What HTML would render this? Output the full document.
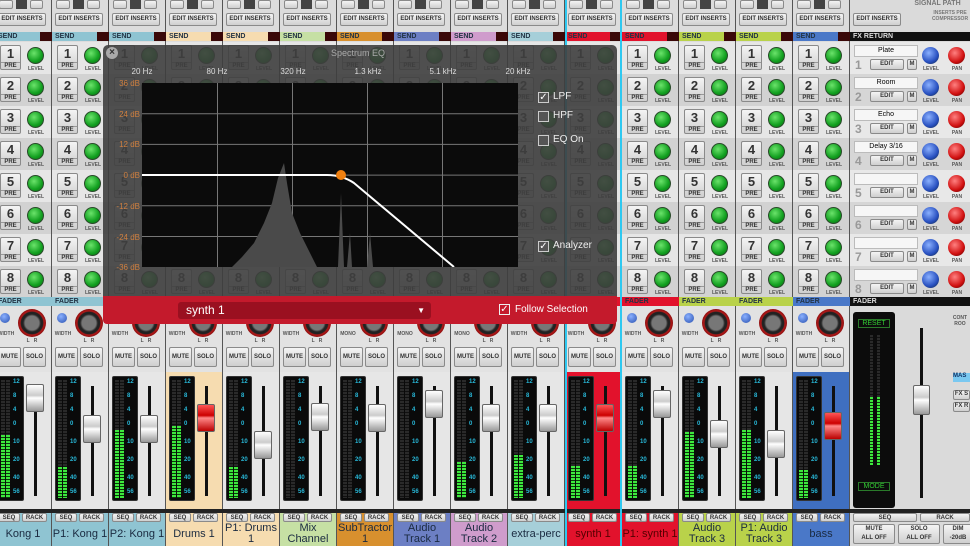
<!DOCTYPE html>
<html><head><meta charset="utf-8">
<style>
*{box-sizing:border-box;margin:0;padding:0}
body{width:970px;height:546px;overflow:hidden;background:#bdbdbd;font-family:"Liberation Sans",sans-serif;position:relative}
.a{position:absolute}
.btn{position:absolute;background:linear-gradient(#f4f4f4,#cfcfcf);border:1px solid #8a8a8a;border-radius:2px;color:#333;font-size:6px;font-weight:bold;text-align:center}
.knob{position:absolute;border-radius:50%;background:radial-gradient(circle at 40% 35%,#6be36b,#12a020 60%,#0a6a12);border:1px solid #2a4a2a}
.lbl{position:absolute;font-size:5px;color:#555;font-weight:bold;text-align:center}
.num{position:absolute;font-size:6px;color:#28b8d8;font-weight:bold}
</style></head><body>
<div id="m"></div>
<script>
var names=["Kong 1","P1: Kong 1","P2: Kong 1","Drums 1","P1: Drums 1","Mix Channel","SubTractor 1","Audio Track 1","Audio Track 2","extra-perc","synth 1","P1: synth 1","Audio Track 3","P1: Audio Track 3","bass"];
var cols=["#8fc4d2","#8fc4d2","#8fc4d2","#f6dcb0","#f6dcb0","#c6e0a4","#d8902e","#6c7fc4","#cf9ccc","#a6cfd9","#e2122c","#e2122c","#b9d24a","#b9d24a","#4a78c8"];
var cap=[384,415,415,404,431,403,404,390,404,404,404,390,420,430,412];
var grn=[435,467,430,426,467,999,999,999,462,455,466,466,432,430,470];
var h="";
for(var i=0;i<15;i++){
 var x=-5+57*i,c=cols[i];
 var fb=i==3?"#f6dcb0":i==10?"#e2122c":i==14?"#3f6fc0":"#e6e6e6";
 h+='<div class="a" style="left:'+x+'px;top:0;width:57px;height:546px;background:#dcdcdc;border-right:1px solid #555">';
 h+='<div class="btn" style="left:4px;top:0;width:14px;height:9px"></div><div class="a" style="left:21px;top:0;width:11px;height:9px;background:#444"></div><div class="btn" style="left:35px;top:0;width:13px;height:9px"></div>';
 h+='<div class="btn" style="left:3px;top:13px;width:48px;height:13px;line-height:11px">EDIT INSERTS</div>';
 h+='<div class="a" style="left:0;top:32px;width:45px;height:9px;background:'+c+';font-size:7px;font-weight:bold;color:#234;line-height:9px;padding-left:3px">SEND</div><div class="a" style="left:45px;top:32px;width:12px;height:9px;background:#3a0808"></div>';
 for(var k=0;k<8;k++){var y=42+32*k;
  h+='<div class="a" style="left:0;top:'+y+'px;width:56px;height:32px;background:'+(k%2?'#d2d2d2':'#e6e6e6')+'"></div>';
  h+='<div class="btn" style="left:5px;top:'+(y+3)+'px;width:21px;height:25px;font-size:13px;line-height:16px">'+(k+1)+'<div style="font-size:6px;line-height:7px;border-top:1px solid #999">PRE</div></div>';
  h+='<div class="knob" style="left:32px;top:'+(y+5)+'px;width:17px;height:17px"></div><div class="lbl" style="left:28px;top:'+(y+24)+'px;width:26px">LEVEL</div>';}
 h+='<div class="a" style="left:0;top:297px;width:57px;height:9px;background:'+c+';font-size:7px;font-weight:bold;color:#234;line-height:9px;padding-left:3px">FADER</div>';
 h+='<div class="a" style="left:0;top:306px;width:56px;height:66px;background:#e2e2e2"></div>';
 h+='<div class="a" style="left:5px;top:313px;width:10px;height:10px;border-radius:50%;background:radial-gradient(circle at 40% 35%,#8ab0ff,#2850b0)"></div>';
 h+='<div class="a" style="left:23px;top:309px;width:28px;height:28px;border-radius:50%;background:radial-gradient(#777 35%,#222 45%,#222 55%,#b01818 60%,#300 100%)"></div>';
 h+='<div class="lbl" style="left:0;top:331px;width:22px">'+(i>=6&&i<=8?'MONO':'WIDTH')+'</div><div class="lbl" style="left:24px;top:338px;width:26px">L &nbsp; R</div>';
 h+='<div class="btn" style="left:3px;top:347px;width:23px;height:20px;line-height:18px">MUTE</div><div class="btn" style="left:28px;top:347px;width:23px;height:20px;line-height:18px">SOLO</div>';
 h+='<div class="a" style="left:0;top:372px;width:56px;height:137px;background:'+fb+'"></div>';
 h+='<div class="a" style="left:3px;top:376px;width:26px;height:125px;background:#0a0a0a;border-radius:2px;border:1px solid #333"></div>';
 h+='<div class="a" style="left:6px;top:380px;width:4px;height:118px;background:repeating-linear-gradient(#2a2a2a 0 2px,#111 2px 3px)"></div><div class="a" style="left:11px;top:380px;width:4px;height:118px;background:repeating-linear-gradient(#2a2a2a 0 2px,#111 2px 3px)"></div>';
 if(grn[i]<999){h+='<div class="a" style="left:6px;top:'+grn[i]+'px;width:4px;height:'+(498-grn[i])+'px;background:repeating-linear-gradient(#3ee83e 0 2px,#0a3a0a 2px 3px)"></div><div class="a" style="left:11px;top:'+grn[i]+'px;width:4px;height:'+(498-grn[i])+'px;background:repeating-linear-gradient(#3ee83e 0 2px,#0a3a0a 2px 3px)"></div>';}
 var nums=["12","8","4","0","10","20","40","56"],ny=[379,393,407,421,439,457,475,489];
 for(var n=0;n<8;n++)h+='<div class="num" style="left:18px;top:'+ny[n]+'px">'+nums[n]+'</div>';
 h+='<div class="a" style="left:39px;top:386px;width:3px;height:110px;background:#111"></div>';
 var red=(i==3||i==10||i==14);
 h+='<div class="a" style="left:31px;top:'+cap[i]+'px;width:18px;height:28px;border-radius:2px;background:'+(red?'linear-gradient(#f55,#c00 40%,#f88 50%,#b00)':'linear-gradient(#fff,#ccc 40%,#fff 50%,#999)')+';border:1px solid #666"></div>';
 h+='<div class="a" style="left:0;top:509px;width:57px;height:4px;background:#222"></div>';
 h+='<div class="a" style="left:0;top:513px;width:56px;height:33px;background:'+c+'"></div>';
 h+='<div class="btn" style="left:3px;top:513px;width:22px;height:9px;line-height:8px">SEQ</div><div class="btn" style="left:27px;top:513px;width:25px;height:9px;line-height:8px">RACK</div>';
 h+='<div class="a" style="left:0;top:522px;width:56px;height:24px;font-size:11px;line-height:11px;color:'+(i==10||i==11?'#500':'#1a2a40')+';text-align:center;display:flex;align-items:center;justify-content:center;overflow:hidden">'+names[i]+'</div>';
 h+='</div>';
}
h+='<div class="a" style="left:565px;top:0;width:2px;height:546px;background:#2ec8f0"></div><div class="a" style="left:620px;top:0;width:2px;height:546px;background:#2ec8f0"></div>';
// master
h+='<div class="a" style="left:850px;top:0;width:120px;height:546px;background:#dadada"></div>';
h+='<div class="btn" style="left:853px;top:13px;width:48px;height:13px;line-height:11px">EDIT INSERTS</div>';
h+='<div class="lbl" style="left:905px;top:0;width:65px;font-size:7px;color:#777">SIGNAL PATH</div><div class="lbl" style="left:930px;top:10px;width:40px;color:#777">INSERTS PRE COMPRESSOR</div>';
h+='<div class="a" style="left:850px;top:32px;width:120px;height:9px;background:#111;color:#ddd;font-size:7px;font-weight:bold;padding-left:3px;line-height:9px">FX RETURN</div>';
var fx=["Plate","Room","Echo","Delay 3/16","","","",""];
for(var k=0;k<8;k++){var y=42+32*k;
 h+='<div class="a" style="left:850px;top:'+y+'px;width:120px;height:32px;background:'+(k%2?'#d6d6d6':'#e8e8e8')+'"></div>';
 h+='<div class="a" style="left:854px;top:'+(y+3)+'px;width:64px;height:12px;background:#f6f6f6;border:1px solid #bbb;font-size:7px;text-align:center;line-height:10px">'+fx[k]+'</div>';
 h+='<div class="a" style="left:855px;top:'+(y+16)+'px;font-size:12px;color:#999;font-weight:bold">'+(k+1)+'</div>';
 h+='<div class="btn" style="left:870px;top:'+(y+17)+'px;width:34px;height:11px;line-height:9px">EDIT</div><div class="btn" style="left:907px;top:'+(y+17)+'px;width:10px;height:11px;line-height:9px">M</div>';
 h+='<div class="a" style="left:922px;top:'+(y+5)+'px;width:17px;height:17px;border-radius:50%;background:radial-gradient(circle at 40% 35%,#8ab0ff,#2850c0 60%,#123)"></div>';
 h+='<div class="a" style="left:948px;top:'+(y+5)+'px;width:17px;height:17px;border-radius:50%;background:radial-gradient(circle at 40% 35%,#ff8080,#d01010 60%,#400)"></div>';
 h+='<div class="lbl" style="left:918px;top:'+(y+24)+'px;width:26px">LEVEL</div><div class="lbl" style="left:945px;top:'+(y+24)+'px;width:24px">PAN</div>';}
h+='<div class="a" style="left:850px;top:297px;width:120px;height:9px;background:#111;color:#ddd;font-size:7px;font-weight:bold;padding-left:3px;line-height:9px">FADER</div>';
h+='<div class="a" style="left:853px;top:312px;width:42px;height:196px;background:#0c0c0c;border-radius:3px"></div>';
h+='<div class="a" style="left:858px;top:319px;width:32px;height:9px;border:1px solid #2a7a2a;color:#3c3;font-size:7px;text-align:center;line-height:7px">RESET</div>';
h+='<div class="a" style="left:870px;top:335px;width:3px;height:130px;background:repeating-linear-gradient(#2a2a2a 0 2px,#111 2px 3px)"></div><div class="a" style="left:877px;top:335px;width:3px;height:130px;background:repeating-linear-gradient(#2a2a2a 0 2px,#111 2px 3px)"></div>';
h+='<div class="a" style="left:870px;top:397px;width:3px;height:68px;background:repeating-linear-gradient(#3ee83e 0 2px,#0a3a0a 2px 3px)"></div><div class="a" style="left:877px;top:397px;width:3px;height:68px;background:repeating-linear-gradient(#3ee83e 0 2px,#0a3a0a 2px 3px)"></div>';
h+='<div class="a" style="left:858px;top:482px;width:32px;height:9px;border:1px solid #2a7a2a;color:#3c3;font-size:7px;text-align:center;line-height:7px">MODE</div>';
h+='<div class="a" style="left:920px;top:328px;width:3px;height:170px;background:#111"></div>';
h+='<div class="a" style="left:913px;top:385px;width:17px;height:30px;border-radius:2px;background:linear-gradient(#fff,#ccc 40%,#fff 50%,#999);border:1px solid #666"></div>';
h+='<div class="a" style="left:953px;top:373px;width:17px;height:9px;background:#7ac8f0;font-size:6px;font-weight:bold;color:#136">MAS</div>';
h+='<div class="btn" style="left:953px;top:390px;width:17px;height:10px">FX S</div><div class="btn" style="left:953px;top:402px;width:17px;height:10px">FX R</div>';
h+='<div class="lbl" style="left:950px;top:315px;width:20px">CONT ROO</div>';
h+='<div class="a" style="left:850px;top:509px;width:120px;height:4px;background:#222"></div>';
h+='<div class="btn" style="left:853px;top:513px;width:64px;height:9px;line-height:8px">SEQ</div><div class="btn" style="left:920px;top:513px;width:50px;height:9px;line-height:8px">RACK</div>';
h+='<div class="btn" style="left:853px;top:524px;width:42px;height:20px;line-height:9px">MUTE<br>ALL OFF</div><div class="btn" style="left:898px;top:524px;width:42px;height:20px;line-height:9px">SOLO<br>ALL OFF</div><div class="btn" style="left:943px;top:524px;width:30px;height:20px;line-height:9px">DIM<br>-20dB</div>';
// EQ overlay
h+='<div class="a" style="left:103px;top:45px;width:514px;height:251px;background:rgba(62,62,62,0.9);border-radius:5px 5px 0 0"></div>';
h+='<div class="a" style="left:106px;top:47px;width:12px;height:12px;border-radius:50%;background:#aaa;color:#333;font-size:10px;text-align:center;line-height:12px;font-weight:bold">×</div>';
h+='<div class="a" style="left:103px;top:48px;width:510px;text-align:center;color:#aaa;font-size:9px">Spectrum EQ</div>';
var fl=["20 Hz","80 Hz","320 Hz","1.3 kHz","5.1 kHz","20 kHz"],fx2=[142,217,293,368,443,518];
for(var j=0;j<6;j++)h+='<div class="a" style="left:'+(fx2[j]-25)+'px;top:67px;width:50px;text-align:center;color:#ddd;font-size:8px">'+fl[j]+'</div>';
var dl=["36 dB","24 dB","12 dB","0 dB","-12 dB","-24 dB","-36 dB"];
for(var j=0;j<7;j++)h+='<div class="a" style="left:104px;top:'+(79+30.7*j)+'px;width:36px;text-align:right;color:#d08040;font-size:8px">'+dl[j]+'</div>';
h+='<svg class="a" style="left:142px;top:83px" width="376" height="184"><rect width="376" height="184" fill="#0b0b0b"/>';
for(var j=1;j<5;j++)h+='<line x1="'+(75*j+0.5)+'" y1="0" x2="'+(75*j+0.5)+'" y2="184" stroke="#777" stroke-width="1"/>';
for(var j=1;j<6;j++)h+='<line x1="0" y1="'+(30.7*j)+'" x2="376" y2="'+(30.7*j)+'" stroke="#777" stroke-width="1"/>';
h+='<path d="M90 184 L100 174 L112 160 L122 140 L130 120 L136 95 L142 80 L145 100 L150 130 L158 150 L168 170 L175 184Z" fill="#4a4a4a"/><path d="M196 184 L199 110 L202 184Z M205 184 L208 150 L210 184Z M225 184 L228 150 L231 184Z" fill="#4a4a4a"/>';
h+='<path d="M0 92 L185 92 Q200 92 212 100 L312 184" fill="none" stroke="#fff" stroke-width="2"/><circle cx="199" cy="92" r="5" fill="#f08010"/></svg>';
var cb=[["LPF",92,1],["HPF",111,0],["EQ On",135,0],["Analyzer",241,1]];
for(var j=0;j<4;j++)h+='<div class="a" style="left:538px;top:'+cb[j][1]+'px;width:11px;height:11px;border:1px solid #ccc;background:#555;color:#fff;font-size:10px;line-height:9px;text-align:center">'+(cb[j][2]?'✓':'')+'</div><div class="a" style="left:553px;top:'+(cb[j][1]-1)+'px;color:#eee;font-size:10px">'+cb[j][0]+'</div>';
h+='<div class="a" style="left:103px;top:296px;width:514px;height:28px;background:#c41a2c;border-radius:0 0 4px 4px"></div>';
h+='<div class="a" style="left:178px;top:302px;width:253px;height:17px;background:#9a1020;border-radius:3px;color:#fff;font-size:12px;padding-left:8px;line-height:17px">synth 1<span style="position:absolute;right:6px;font-size:8px">▼</span></div>';
h+='<div class="a" style="left:499px;top:304px;width:11px;height:11px;border:1px solid #eee;color:#fff;font-size:10px;line-height:9px;text-align:center">✓</div><div class="a" style="left:515px;top:304px;color:#fff;font-size:10px">Follow Selection</div>';
document.getElementById("m").innerHTML=h;
</script>
</body></html>
